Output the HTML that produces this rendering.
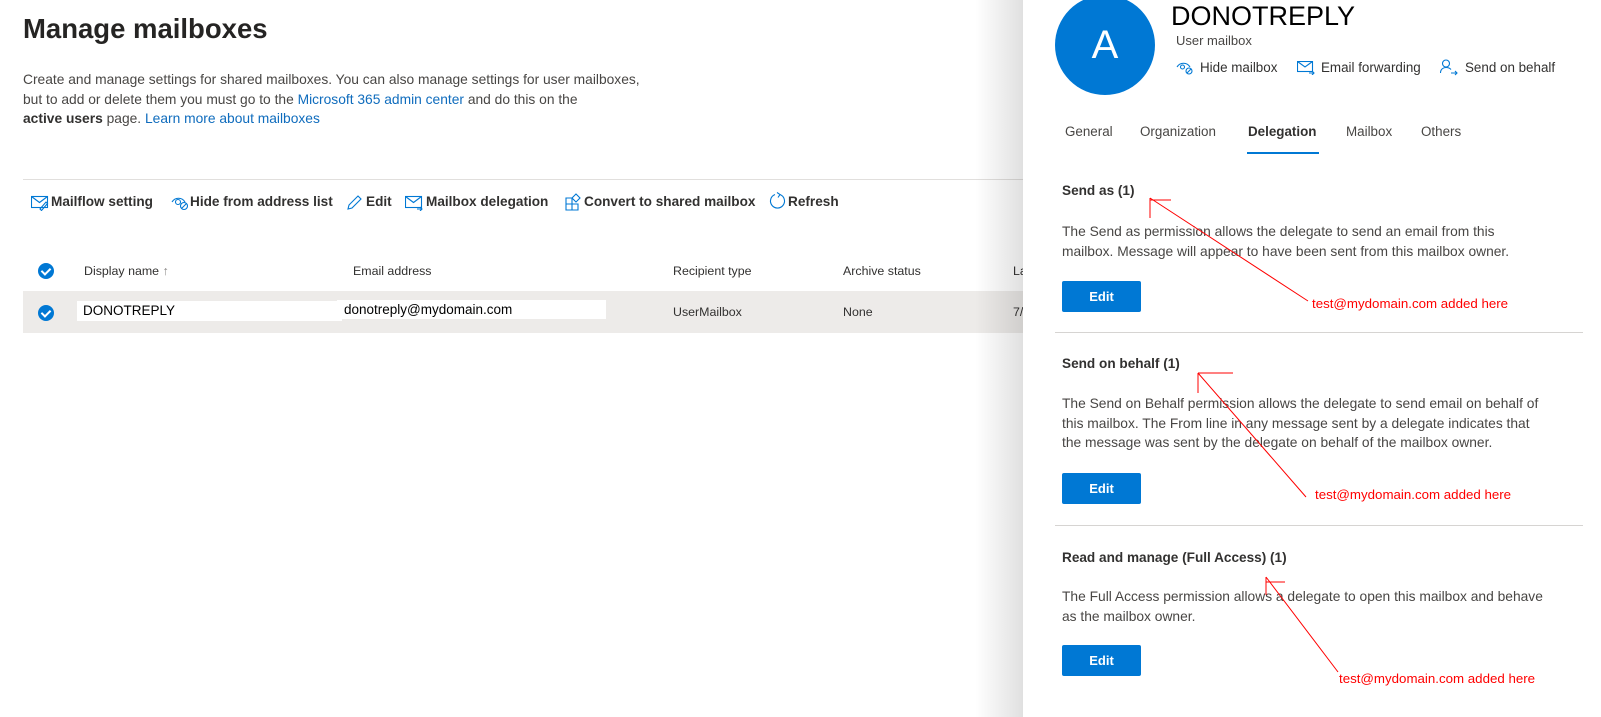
<!DOCTYPE html>
<html><head><meta charset="utf-8"><style>
*{margin:0;padding:0;box-sizing:border-box}
body{width:1601px;height:717px;position:relative;overflow:hidden;background:#fff;font-family:"Liberation Sans",sans-serif;color:#323130}
.a{position:absolute;white-space:nowrap}
.desc{font-size:13.8px;color:#484644;line-height:19.5px}
.link{color:#0f6cbd}
.tb{font-size:13.6px;font-weight:bold;color:#323130;top:194px}
.th{font-size:12.4px;color:#323130;top:264px}
.td{font-size:12.4px;color:#323130;top:305px}
.chk{position:absolute;width:16px;height:16px;border-radius:50%;background:#0078d4}
.chk:after{content:"";position:absolute;left:5px;top:3px;width:4px;height:7px;border:solid #fff;border-width:0 2px 2px 0;transform:rotate(45deg)}
.h{font-size:13.6px;font-weight:bold;color:#323130}
.p{font-size:13.8px;color:#484644;line-height:19.5px}
.btn{position:absolute;left:1062px;width:79px;height:31px;background:#0078d4;border-radius:2px;color:#fff;font-size:13px;font-weight:bold;text-align:center;line-height:31px}
.hr{position:absolute;left:1055px;width:528px;height:1px;background:#d6d4d2}
.red{font-size:13.3px;color:#f00}
.tab{font-size:13.4px;color:#484644;top:124px}
</style></head><body>
<div class="a" style="left:23px;top:13px;font-size:27.5px;font-weight:bold;color:#252423">Manage mailboxes</div>
<div class="a desc" style="left:23px;top:70px">Create and manage settings for shared mailboxes. You can also manage settings for user mailboxes,<br>but to add or delete them you must go to the <span class="link">Microsoft 365 admin center</span> and do this on the<br><b style="color:#323130">active users</b> page. <span class="link">Learn more about mailboxes</span></div>
<div style="position:absolute;left:23px;top:179px;width:1000px;height:1px;background:#e1dfdd"></div>

<svg class="a" style="left:31px;top:195px" width="18" height="16" viewBox="0 0 18 16" fill="none" stroke="#0078d4" stroke-width="1.1"><rect x="0.5" y="1.5" width="16" height="11"/><path d="M0.5 1.5l8 6 8-6"/><path d="M9 14l6-7 1.5 1.5-6 7z"/></svg>
<div class="a tb" style="left:51px">Mailflow setting</div>
<svg class="a" style="left:171px;top:195px" width="18" height="16" viewBox="0 0 18 16" fill="none" stroke="#0078d4" stroke-width="1.1"><path d="M1 7c3-5 10-5 13 0"/><circle cx="7" cy="7" r="2.5"/><circle cx="13" cy="11" r="3.5"/><path d="M10.5 13.5l5-5"/></svg>
<div class="a tb" style="left:190px">Hide from address list</div>
<svg class="a" style="left:346px;top:194px" width="16" height="17" viewBox="0 0 16 17" fill="none" stroke="#0078d4" stroke-width="1.1"><path d="M2 15l1-4 9-9 3 3-9 9z"/></svg>
<div class="a tb" style="left:366px">Edit</div>
<svg class="a" style="left:405px;top:195px" width="18" height="16" viewBox="0 0 18 16" fill="none" stroke="#0078d4" stroke-width="1.1"><rect x="0.5" y="1.5" width="16" height="11"/><path d="M0.5 1.5l8 6 8-6"/><path d="M12 14h5m-2-2l2 2-2 2"/></svg>
<div class="a tb" style="left:426px">Mailbox delegation</div>
<svg class="a" style="left:565px;top:193px" width="17" height="18" viewBox="0 0 17 18" fill="none" stroke="#0078d4" stroke-width="1.1"><path d="M1 5h6v12H1zM7 11h6v6H7zM1 11h6"/><path d="M11 1l4 4-4 4-4-4z"/></svg>
<div class="a tb" style="left:584px">Convert to shared mailbox</div>
<svg class="a" style="left:769px;top:192px" width="17" height="19" viewBox="0 0 17 19" fill="none" stroke="#0078d4" stroke-width="1.1"><path d="M6 2.5A7 7 0 1 0 11 2.5"/><path d="M8 0.5l3 2-2 3"/></svg>
<div class="a tb" style="left:788px">Refresh</div>

<div class="chk" style="left:38px;top:263px"></div>
<div class="a th" style="left:84px">Display name <span style="color:#8a8886">↑</span></div>
<div class="a th" style="left:353px">Email address</div>
<div class="a th" style="left:673px">Recipient type</div>
<div class="a th" style="left:843px">Archive status</div>
<div class="a th" style="left:1013px">La</div>
<div style="position:absolute;left:23px;top:291px;width:1000px;height:42px;background:#edebe9"></div>
<div class="chk" style="left:38px;top:305px"></div>
<div style="position:absolute;left:77px;top:301px;width:265px;height:20px;background:#fff"></div>
<div style="position:absolute;left:337px;top:300px;width:269px;height:19px;background:#fff"></div>
<div class="a" style="left:83px;top:303px;font-size:13.5px;color:#000">DONOTREPLY</div>
<div class="a" style="left:344px;top:302px;font-size:13.5px;color:#000">donotreply@mydomain.com</div>
<div class="a td" style="left:673px">UserMailbox</div>
<div class="a td" style="left:843px">None</div>
<div class="a td" style="left:1013px">7/</div>

<div style="position:absolute;left:975px;top:0;width:48px;height:717px;background:linear-gradient(to right,rgba(0,0,0,0),rgba(0,0,0,0.12))"></div>
<div style="position:absolute;left:1023px;top:0;width:578px;height:717px;background:#fff"></div>

<div style="position:absolute;left:1055px;top:-5px;width:100px;height:100px;border-radius:50%;background:#0078d4;color:#fff;font-size:40px;text-align:center;line-height:100px">A</div>
<div class="a" style="left:1171px;top:1px;font-size:27px;color:#000">DONOTREPLY</div>
<div class="a" style="left:1176px;top:33px;font-size:13px;color:#484644">User mailbox</div>
<svg class="a" style="left:1176px;top:61px" width="18" height="14" viewBox="0 0 18 14" fill="none" stroke="#0078d4" stroke-width="1.1"><path d="M1 6c3-5 10-5 13 0"/><circle cx="6.5" cy="6" r="2"/><circle cx="13" cy="10" r="3"/><path d="M11 12l4-4"/></svg>
<div class="a" style="left:1200px;top:60px;font-size:13.4px;color:#323130">Hide mailbox</div>
<svg class="a" style="left:1297px;top:61px" width="18" height="14" viewBox="0 0 18 14" fill="none" stroke="#0078d4" stroke-width="1.1"><rect x="0.5" y="0.5" width="15" height="10"/><path d="M0.5 0.5l7.5 5.5 7.5-5.5"/><path d="M12 12h5m-2-2l2 2-2 2"/></svg>
<div class="a" style="left:1321px;top:60px;font-size:13.4px;color:#323130">Email forwarding</div>
<svg class="a" style="left:1440px;top:59px" width="18" height="17" viewBox="0 0 18 17" fill="none" stroke="#0078d4" stroke-width="1.1"><circle cx="6" cy="4.5" r="3.5"/><path d="M0.5 14c0-4 3-5.5 5.5-5.5s4 .8 5 2"/><path d="M11 14h6m-2-2l2 2-2 2"/></svg>
<div class="a" style="left:1465px;top:60px;font-size:13.4px;color:#323130">Send on behalf</div>

<div class="a tab" style="left:1065px">General</div>
<div class="a tab" style="left:1140px">Organization</div>
<div class="a tab" style="left:1248px;color:#323130;font-weight:bold">Delegation</div>
<div class="a tab" style="left:1346px">Mailbox</div>
<div class="a tab" style="left:1421px">Others</div>
<div style="position:absolute;left:1247px;top:152px;width:72px;height:2px;background:#0078d4"></div>

<div class="a h" style="left:1062px;top:183px">Send as (1)</div>
<div class="a p" style="left:1062px;top:222px">The Send as permission allows the delegate to send an email from this<br>mailbox. Message will appear to have been sent from this mailbox owner.</div>
<div class="btn" style="top:281px">Edit</div>
<div class="hr" style="top:332px"></div>

<div class="a h" style="left:1062px;top:356px">Send on behalf (1)</div>
<div class="a p" style="left:1062px;top:394px">The Send on Behalf permission allows the delegate to send email on behalf of<br>this mailbox. The From line in any message sent by a delegate indicates that<br>the message was sent by the delegate on behalf of the mailbox owner.</div>
<div class="btn" style="top:473px">Edit</div>
<div class="hr" style="top:525px"></div>

<div class="a h" style="left:1062px;top:550px">Read and manage (Full Access) (1)</div>
<div class="a p" style="left:1062px;top:587px">The Full Access permission allows a delegate to open this mailbox and behave<br>as the mailbox owner.</div>
<div class="btn" style="top:645px">Edit</div>

<svg class="a" style="left:0;top:0" width="1601" height="717" fill="none" stroke="#f00" stroke-width="1">
<path d="M1150 198L1308 301M1150 198v20M1150 200h21"/>
<path d="M1198 373L1306 497M1198 373v20M1198 373h35"/>
<path d="M1266 577L1338 672M1266 577v18M1266 582h19"/>
</svg>
<div class="a red" style="left:1312px;top:296px">test@mydomain.com added here</div>
<div class="a red" style="left:1315px;top:487px">test@mydomain.com added here</div>
<div class="a red" style="left:1339px;top:671px">test@mydomain.com added here</div>
</body></html>
